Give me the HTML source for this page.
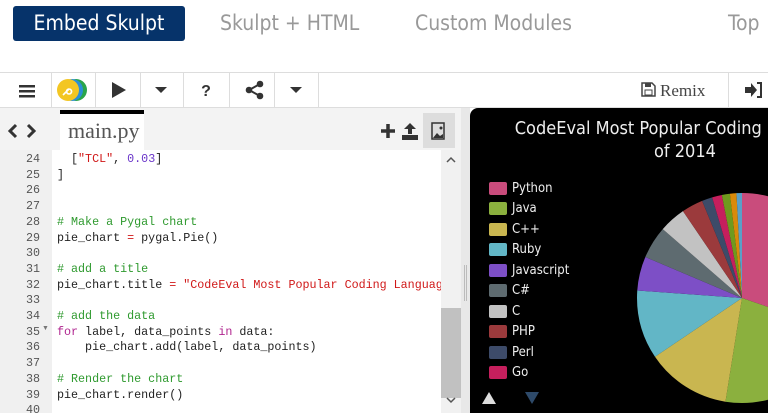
<!DOCTYPE html>
<html><head><meta charset="utf-8"><style>
*{margin:0;padding:0;box-sizing:border-box}
body{width:768px;height:413px;overflow:hidden;background:#fff;font-family:"Liberation Sans",sans-serif;position:relative}
.abs{position:absolute}
.nav{font-family:"DejaVu Sans Condensed","Liberation Sans",sans-serif;font-size:21px;color:#999;top:11px}
.tb{top:72px;height:36px;border-top:1px solid #ddd;border-bottom:1px solid #ddd;left:0;width:768px;background:#fff}
.sep{top:72px;height:36px;width:1px;background:#ddd}
.code{font-family:"Liberation Mono",monospace;font-size:11.7px;line-height:15.7px;white-space:pre}
.c{color:#2f9a2f}.s{color:#d01818}.n{color:#6a35c9}.k{color:#b0258f}.o{color:#d01818}
.leg{font-family:"DejaVu Sans Condensed","Liberation Sans",sans-serif;font-size:13px;color:#eee;left:489px}
.leg div{height:20.5px;display:flex;align-items:center}
.leg span{display:inline-block;width:18px;height:13px;border-radius:2px;margin-right:5px}
</style></head><body>
<div class="abs" style="left:13px;top:6px;width:172px;height:35px;background:#06336a;border-radius:3px;color:#fff;font-family:'DejaVu Sans Condensed','Liberation Sans',sans-serif;font-size:21px;line-height:35px;text-align:center">Embed Skulpt</div>
<div class="abs nav" style="left:220px">Skulpt + HTML</div>
<div class="abs nav" style="left:415px">Custom Modules</div>
<div class="abs nav" style="left:728px">Top</div>

<div class="abs tb"></div>
<div class="abs sep" style="left:51px"></div><div class="abs sep" style="left:95px"></div><div class="abs sep" style="left:140px"></div><div class="abs sep" style="left:183px"></div><div class="abs sep" style="left:229px"></div><div class="abs sep" style="left:274px"></div><div class="abs sep" style="left:318px"></div><div class="abs sep" style="left:728px"></div>
<svg class="abs" style="left:0;top:72px" width="768" height="36">
<g fill="#333"><rect x="19" y="13" width="16" height="2.5"/><rect x="19" y="18" width="16" height="2.5"/><rect x="19" y="23" width="16" height="2.5"/></g>
<circle cx="76" cy="18" r="11" fill="#2aa54a"/><circle cx="72" cy="18" r="11" fill="#2b8fd6"/><circle cx="68" cy="18" r="11" fill="#f3c623"/>
<path d="M63 23l6-6M69 17a2.5 2.5 0 1 0 0.1 0" stroke="#fff" stroke-width="1.6" fill="none"/>
<path d="M112 10l14 8-14 8z" fill="#333"/>
<path d="M155 15h12l-6 6z" fill="#333"/>
<text x="206" y="24" font-family="Liberation Sans" font-weight="bold" font-size="16" fill="#333" text-anchor="middle">?</text>
<g fill="#333"><circle cx="260" cy="12" r="3.3"/><circle cx="249" cy="18" r="3.3"/><circle cx="260" cy="24" r="3.3"/></g>
<path d="M260 12L249 18L260 24" stroke="#333" stroke-width="2" fill="none"/>
<path d="M290 15h12l-6 6z" fill="#333"/>
<path d="M642 11h10l3 3v10h-13z" stroke="#444" stroke-width="1.5" fill="none"/><rect x="645" y="11" width="6" height="4" fill="#444"/><rect x="645" y="18" width="7" height="5" fill="none" stroke="#444"/>
<text x="660" y="24" font-family="Liberation Serif" font-size="17" fill="#444">Remix</text>
<path d="M745 15h6v-4l6 7-6 7v-4h-6z" fill="#333"/><path d="M757 11h4v14h-4" stroke="#333" stroke-width="2" fill="none"/>
</svg>

<div class="abs" style="left:0;top:108px;width:461px;height:42px;background:#f3f3f3"></div>
<svg class="abs" style="left:0;top:108px" width="60" height="42"><path d="M16 17l-6 6 6 6M28 17l6 6-6 6" stroke="#333" stroke-width="3" fill="none"/></svg>
<div class="abs" style="left:60px;top:110px;width:84px;height:40px;background:#fff;border-top:4px solid #000"></div>
<div class="abs" style="left:68px;top:118px;font-family:'Liberation Serif',serif;font-size:22px;color:#555">main.py</div>
<div class="abs" style="left:423px;top:113px;width:32px;height:35px;background:#ddd"></div>
<svg class="abs" style="left:375px;top:113px" width="85" height="36">
<path d="M6 18h14M13 11v14" stroke="#333" stroke-width="3.5"/>
<path d="M35 10l-6 6h4v5h4v-5h4z" fill="#333"/><rect x="27" y="22" width="16" height="5" fill="#333"/>
<rect x="57" y="10" width="12" height="16" fill="none" stroke="#333" stroke-width="1.5"/><path d="M58 25l4-5 3 3 3-2v4z" fill="#333"/><circle cx="66" cy="15" r="1.5" fill="#333"/>
</svg>

<div class="abs" style="left:0;top:150px;width:52px;height:263px;background:#f0f0f0"></div>
<div class="abs code" style="left:0;top:152px;width:40px;text-align:right;color:#555">24
25
26
27
28
29
30
31
32
33
34
35
36
37
38
39
40</div>
<div class="abs" style="left:42px;top:325px;font-size:7px;color:#777">▼</div>
<div class="abs code" style="left:57px;top:152px;width:384px;overflow:hidden;color:#222">  [<span class="s">"TCL"</span>, <span class="n">0.03</span>]
]


<span class="c"># Make a Pygal chart</span>
pie_chart <span class="o">=</span> pygal.Pie()

<span class="c"># add a title</span>
pie_chart.title <span class="o">=</span> <span class="s">"CodeEval Most Popular Coding Languages of 2014"</span>

<span class="c"># add the data</span>
<span class="k">for</span> label, data_points <span class="k">in</span> data:
    pie_chart.add(label, data_points)

<span class="c"># Render the chart</span>
pie_chart.render()
</div>
<div class="abs" style="left:441px;top:150px;width:20px;height:263px;background:#f1f1f1"></div>
<div class="abs" style="left:441px;top:308px;width:20px;height:90px;background:#c1c1c1"></div>
<svg class="abs" style="left:441px;top:150px" width="20" height="263"><path d="M6 12l4-4 4 4M6 248l4 4 4-4" stroke="#555" stroke-width="1.5" fill="none"/></svg>
<div class="abs" style="left:461px;top:108px;width:9px;height:305px;background:#e8e8e8"></div>
<div class="abs" style="left:464px;top:265px;width:3px;height:36px;border-left:1px solid #bbb;border-right:1px solid #bbb"></div>

<div class="abs" style="left:470px;top:108px;width:298px;height:305px;background:#000;border-top-left-radius:8px;overflow:hidden">
<div class="abs" style="left:0;top:9px;width:430px;text-align:center;font-family:'DejaVu Sans Condensed','Liberation Sans',sans-serif;font-size:18px;line-height:23px;color:#eee;white-space:nowrap">CodeEval Most Popular Coding Languages<br>of 2014</div>
</div>
<div class="abs leg" style="top:178px">
<div><span style="background:#c94c7c"></span>Python</div>
<div><span style="background:#8bb03e"></span>Java</div>
<div><span style="background:#c9b650"></span>C++</div>
<div><span style="background:#62b6c6"></span>Ruby</div>
<div><span style="background:#7d4fc6"></span>Javascript</div>
<div><span style="background:#5e6b70"></span>C#</div>
<div><span style="background:#c2c2c2"></span>C</div>
<div><span style="background:#9b3a3c"></span>PHP</div>
<div><span style="background:#3d4b69"></span>Perl</div>
<div><span style="background:#c61f5d"></span>Go</div>
</div>
<svg class="abs" style="left:470px;top:380px" width="80" height="30"><path d="M19 12l7 12h-14z" fill="#ddd"/><path d="M62 24l-7-12h14z" fill="#2e4a6a"/></svg>
<svg class="abs" style="left:470px;top:108px" width="298" height="305">
<g transform="translate(272 190) rotate(-90)" fill="none" stroke-width="105">
<circle r="52.5" stroke="#c94c7c" stroke-dasharray="99.9 400" stroke-dashoffset="0"/>
<circle r="52.5" stroke="#8bb03e" stroke-dasharray="73.2 400" stroke-dashoffset="-99.9"/>
<circle r="52.5" stroke="#c9b650" stroke-dasharray="42.9 400" stroke-dashoffset="-173.1"/>
<circle r="52.5" stroke="#62b6c6" stroke-dasharray="35.0 400" stroke-dashoffset="-216"/>
<circle r="52.5" stroke="#7d4fc6" stroke-dasharray="17.2 400" stroke-dashoffset="-251"/>
<circle r="52.5" stroke="#5e6b70" stroke-dasharray="16.5 400" stroke-dashoffset="-268.2"/>
<circle r="52.5" stroke="#c2c2c2" stroke-dasharray="13.5 400" stroke-dashoffset="-284.7"/>
<circle r="52.5" stroke="#9b3a3c" stroke-dasharray="10.9 400" stroke-dashoffset="-298.2"/>
<circle r="52.5" stroke="#3d4b69" stroke-dasharray="5.3 400" stroke-dashoffset="-309.1"/>
<circle r="52.5" stroke="#c61f5d" stroke-dasharray="5 400" stroke-dashoffset="-314.4"/>
<circle r="52.5" stroke="#6f9a1e" stroke-dasharray="4 400" stroke-dashoffset="-319.4"/>
<circle r="52.5" stroke="#d98a0a" stroke-dasharray="3.3 400" stroke-dashoffset="-323.4"/>
<circle r="52.5" stroke="#5aa0c8" stroke-dasharray="3.2 400" stroke-dashoffset="-326.7"/>
</g>
</svg>
</body></html>
